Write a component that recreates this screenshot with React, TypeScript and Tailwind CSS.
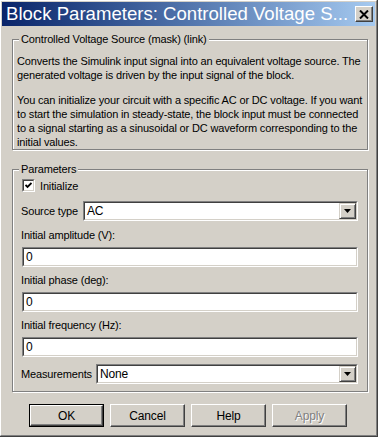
import React from "react";

const font = { fontFamily: '"Liberation Sans", Arial, sans-serif' };

function GroupBox({ label, className, children }: { label: string; className?: string; children: React.ReactNode }) {
  return (
    <div className={"relative border border-[#808080] shadow-[inset_1px_1px_0_#fff,1px_1px_0_#fff] " + (className ?? "")}>
      <div className="absolute left-[6px] top-[-8px] bg-[#d4d0c8] px-[2px] text-[11px] leading-[14px] tracking-[-0.15px] text-black">{label}</div>
      {children}
    </div>
  );
}

function Sunken({ className, children }: { className?: string; children?: React.ReactNode }) {
  return (
    <div className={"border-t border-l border-[#808080] border-r border-b border-r-white border-b-white " + (className ?? "")}>
      <div className="h-full w-full border-t border-l border-[#404040] border-r border-b border-r-[#d4d0c8] border-b-[#d4d0c8] bg-white">
        {children}
      </div>
    </div>
  );
}

function Select({ value, className }: { value: string; className?: string }) {
  return (
    <Sunken className={"h-[20px] " + (className ?? "")}>
      <div className="flex h-full items-center">
        <span className="flex-1 pl-[2px] text-[12px] leading-[14px] text-black">{value}</span>
        <div className="flex h-[16px] w-[17px] items-center justify-center border-t border-l border-t-[#d4d0c8] border-l-[#d4d0c8] border-r border-b border-r-[#404040] border-b-[#404040] bg-[#d4d0c8] shadow-[inset_1px_1px_0_#fff,inset_-1px_-1px_0_#808080]">
          <svg width="7" height="4" viewBox="0 0 7 4"><path d="M0 0h7L3.5 4z" fill="#000" /></svg>
        </div>
      </div>
    </Sunken>
  );
}

function Input({ value }: { value: string }) {
  return (
    <Sunken className="h-[20px]">
      <div className="flex h-full items-center pl-[2px] text-[12px] leading-[14px] text-black">{value}</div>
    </Sunken>
  );
}

function Button({ label, def, disabled }: { label: string; def?: boolean; disabled?: boolean }) {
  const inner = (
    <div className="flex h-full w-full items-center justify-center border-t border-l border-white border-r border-b border-r-[#404040] border-b-[#404040] bg-[#d4d0c8] shadow-[inset_-1px_-1px_0_#808080]">
      <span className={"text-[12px] leading-[14px] " + (disabled ? "text-[#808080] [text-shadow:1px_1px_0_#fff]" : "text-black")}>{label}</span>
    </div>
  );
  return def ? (
    <div className="h-[23px] w-[75px] border border-black">{inner}</div>
  ) : (
    <div className="h-[23px] w-[75px]">{inner}</div>
  );
}

export default function App() {
  return (
    <div className="h-[442px] w-[392px] bg-white" style={font}>
      <div className="h-[437px] w-[378px] border-r border-b border-[#404040] bg-[#d4d0c8]">
        <div className="h-full w-full border-t border-l border-white border-r border-b border-r-[#808080] border-b-[#808080] pt-[1px] pl-[1px] pr-[1px]">
          {/* Title bar */}
          <div className="flex h-[24px] items-center bg-gradient-to-r from-[#0a246a] to-[#a6caf0] pl-[4px] pr-[2px]">
            <span className="min-w-0 flex-1 overflow-hidden whitespace-nowrap text-[18.6px] leading-[24px] text-white">Block Parameters: Controlled Voltage S...</span>
            <div className="flex h-[16px] w-[18px] shrink-0 items-center justify-center border-t border-l border-white border-r border-b border-r-[#404040] border-b-[#404040] bg-[#d4d0c8] shadow-[inset_-1px_-1px_0_#808080]">
              <svg width="10" height="9" viewBox="0 0 10 9">
                <path d="M1 0.5L9 8.5M9 0.5L1 8.5" stroke="#000" strokeWidth="2" />
              </svg>
            </div>
          </div>

          <div className="px-[10px] pr-[7px] pt-[13px] text-[11px] tracking-[-0.15px] text-black">
            <GroupBox label="Controlled Voltage Source (mask) (link)" className="h-[111px]">
              <div className="pl-[4px] pr-[1px] pt-[14px] text-[11px] leading-[14px]">
                <p>Converts the Simulink input signal into an equivalent voltage source. The generated voltage is driven by the input signal of the block.</p>
                <p className="mt-[11px]">You can initialize your circuit with a specific AC or DC voltage. If you want to start the simulation in steady-state, the block input must be connected to a signal starting as a sinusoidal or DC waveform corresponding to the initial values.</p>
              </div>
            </GroupBox>

            <GroupBox label="Parameters" className="mt-[19px] h-[223px]">
              <div className="flex flex-col pl-[9px] pr-[9px] pt-[9px] text-[11px] leading-[14px]">
                <div className="flex h-[13px] items-center">
                  <div className="h-[13px] w-[13px] border-t border-l border-[#808080] border-r border-b border-r-white border-b-white">
                    <div className="flex h-full w-full items-center justify-center border-t border-l border-[#404040] border-r border-b border-r-[#d4d0c8] border-b-[#d4d0c8] bg-white">
                      <svg width="7" height="7" viewBox="0 0 7 7">
                        <path d="M0.5 3L2.5 5L6.5 1" stroke="#000" strokeWidth="1.8" fill="none" />
                      </svg>
                    </div>
                  </div>
                  <span className="ml-[5px]">Initialize</span>
                </div>
                <div className="mt-[9px] flex items-center">
                  <span className="-ml-[1px] w-[62px]">Source type</span>
                  <Select value="AC" className="flex-1" />
                </div>
                <div className="-ml-[1px] mt-[7px]">Initial amplitude (V):</div>
                <div className="mt-[5px]"><Input value="0" /></div>
                <div className="-ml-[1px] mt-[6px]">Initial phase (deg):</div>
                <div className="mt-[5px]"><Input value="0" /></div>
                <div className="-ml-[1px] mt-[6px]">Initial frequency (Hz):</div>
                <div className="mt-[5px]"><Input value="0" /></div>
                <div className="mt-[7px] flex items-center">
                  <span className="-ml-[1px] w-[75px]">Measurements</span>
                  <Select value="None" className="flex-1" />
                </div>
              </div>
            </GroupBox>

            <div className="mt-[12px] flex justify-center gap-[6px] pr-[4px]">
              <Button label="OK" def />
              <Button label="Cancel" />
              <Button label="Help" />
              <Button label="Apply" disabled />
            </div>
          </div>
        </div>
      </div>
    </div>
  );
}
